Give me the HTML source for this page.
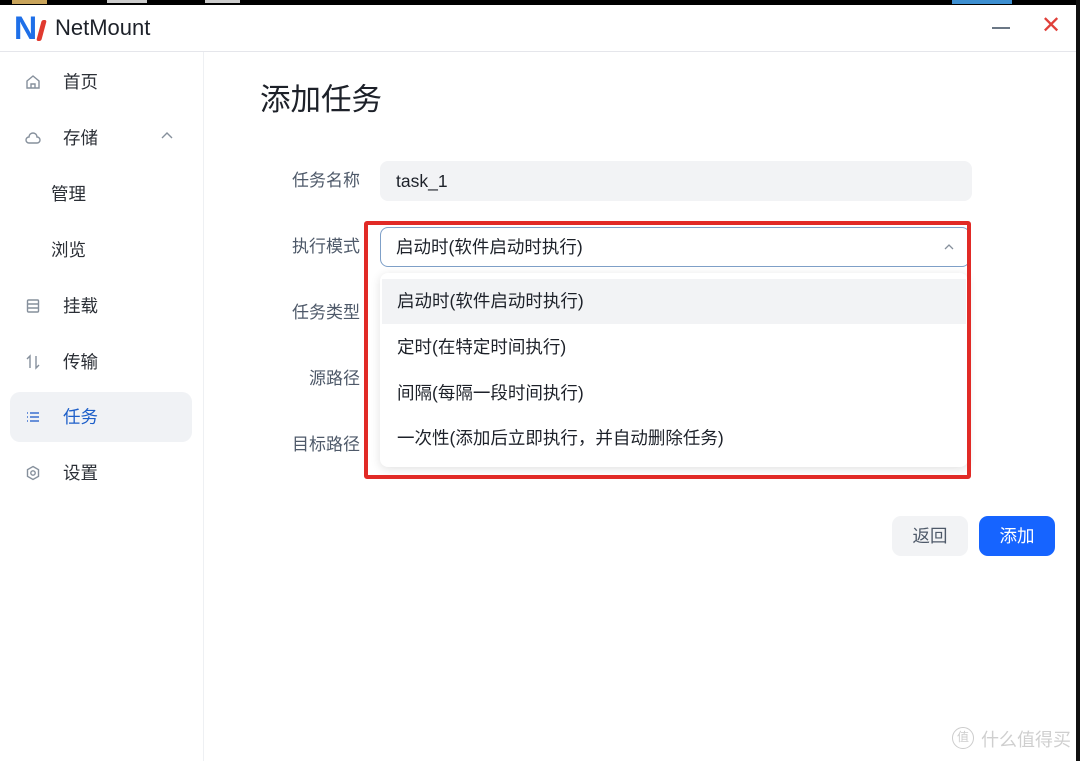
<!DOCTYPE html>
<html><head><meta charset="utf-8"><style>
*{margin:0;padding:0;box-sizing:border-box}
body{width:1080px;height:761px;overflow:hidden;background:#fff;font-family:"Liberation Sans","Noto Sans CJK SC",sans-serif;position:relative;color:#1d2129}
.a{position:absolute}
.nav{position:absolute;left:10px;width:182px;height:50px;border-radius:10px;font-size:17.5px;color:#2b2f36}
.nav span.t{position:absolute;left:53px;top:15px;line-height:20px}
.nav svg{position:absolute;left:15px;top:17px}
.lbl{position:absolute;font-size:17px;color:#4e5969;text-align:right;width:110px;left:250px;line-height:20px}
.opt{position:absolute;left:382px;width:584px;height:45px;font-size:17.5px;padding:12px 0 0 15px;color:#1d2129;line-height:20px}
</style></head><body>
<div class="a" style="left:0;top:0;width:1080px;height:5px;background:#000"></div>
<div class="a" style="left:12px;top:0;width:35px;height:4px;background:#c9a45a"></div>
<div class="a" style="left:107px;top:0;width:40px;height:3px;background:#ccc"></div>
<div class="a" style="left:205px;top:0;width:35px;height:3px;background:#ccc"></div>
<div class="a" style="left:952px;top:0;width:60px;height:4px;background:#3d8fd1"></div>
<div class="a" style="left:1076px;top:0;width:4px;height:761px;background:#111"></div>
<div class="a" style="left:0;top:51px;width:1076px;height:1px;background:#e5e6eb"></div>
<div class="a" style="left:14px;top:13px;font-size:32px;font-weight:bold;color:#1e6fe8;line-height:30px">N</div>
<div class="a" style="left:39px;top:20px;width:5px;height:21px;background:#e03a2f;transform:skewX(-15deg);border-radius:2px"></div>
<div class="a" style="left:55px;top:15px;font-size:22px;color:#1d2129;line-height:26px">NetMount</div>
<div class="a" style="left:992px;top:27px;width:18px;height:2px;background:#6b7785"></div>
<div class="a" style="left:1041px;top:14px;font-size:24px;color:#e0403a;line-height:24px">✕</div>
<div class="a" style="left:203px;top:52px;width:1px;height:709px;background:#eef0f3"></div>
<div class="nav" style="top:57px"><svg width="16" height="16" viewBox="0 0 16 16" fill="none" stroke="#86909c" stroke-width="1.4"><path d="M2 7L8 2l6 5v7H2z"/><path d="M6 14v-4h4v4"/></svg><span class="t">首页</span></div>
<div class="nav" style="top:113px"><svg width="16" height="16" viewBox="0 0 16 16" fill="none" stroke="#86909c" stroke-width="1.4"><path d="M4 13h8a3 3 0 0 0 0-6 4 4 0 0 0-8 0 3 3 0 0 0 0 6z"/></svg><span class="t">存储</span><svg style="left:150px;top:18px" width="14" height="10" viewBox="0 0 14 10" fill="none" stroke="#86909c" stroke-width="1.4"><path d="M2 7l5-5 5 5"/></svg></div>
<div class="nav" style="top:169px"><span class="t" style="left:41px">管理</span></div>
<div class="nav" style="top:225px"><span class="t" style="left:41px">浏览</span></div>
<div class="nav" style="top:281px"><svg width="16" height="16" viewBox="0 0 16 16" fill="none" stroke="#86909c" stroke-width="1.4"><rect x="2.5" y="2" width="11" height="12" rx="1"/><path d="M2.5 6h11M2.5 10h11"/></svg><span class="t">挂载</span></div>
<div class="nav" style="top:337px"><svg width="16" height="16" viewBox="0 0 16 16" fill="none" stroke="#86909c" stroke-width="1.4"><path d="M5 14V2L2 5M11 2v12l3-3"/></svg><span class="t">传输</span></div>
<div class="nav" style="top:392px;background:#f0f2f5;color:#1d5fc9"><svg width="16" height="16" viewBox="0 0 16 16" fill="none" stroke="#3a6fd0" stroke-width="1.4"><path d="M5 4h9M5 8h9M5 12h9M2 4h1M2 8h1M2 12h1"/></svg><span class="t">任务</span></div>
<div class="nav" style="top:448px"><svg width="16" height="16" viewBox="0 0 16 16" fill="none" stroke="#86909c" stroke-width="1.4"><path d="M8 1.5l5.5 3.2v6.6L8 14.5l-5.5-3.2V4.7z"/><circle cx="8" cy="8" r="2.2"/></svg><span class="t">设置</span></div>
<div class="a" style="left:260px;top:82px;font-size:30.5px;color:#1d2129;line-height:36px">添加任务</div>
<div class="lbl" style="top:171px">任务名称</div>
<div class="a" style="left:380px;top:161px;width:592px;height:40px;background:#f2f3f5;border-radius:8px;font-size:17.5px;padding:10px 0 0 16px;line-height:20px">task_1</div>
<div class="lbl" style="top:237px">执行模式</div>
<div class="lbl" style="top:303px">任务类型</div>
<div class="lbl" style="top:369px">源路径</div>
<div class="lbl" style="top:435px">目标路径</div>
<div class="a" style="left:380px;top:227px;width:590px;height:40px;border:1px solid #7fa0c8;border-radius:8px;background:#fff;font-size:17.5px;padding:9px 0 0 15px;line-height:20px">启动时(软件启动时执行)</div>
<svg class="a" style="left:943px;top:243px" width="12" height="8" viewBox="0 0 12 8" fill="none" stroke="#86909c" stroke-width="1.3"><path d="M2 6l4-4 4 4"/></svg>
<div class="a" style="left:380px;top:273px;width:588px;height:194px;background:#fff;border-radius:8px;box-shadow:0 2px 10px rgba(0,0,0,.12)"></div>
<div class="opt" style="top:279px;background:#f2f3f5">启动时(软件启动时执行)</div>
<div class="opt" style="top:325px">定时(在特定时间执行)</div>
<div class="opt" style="top:371px">间隔(每隔一段时间执行)</div>
<div class="opt" style="top:416px">一次性(添加后立即执行，并自动删除任务)</div>
<div class="a" style="left:364px;top:221px;width:607px;height:258px;border:4px solid #e12a26;border-radius:3px"></div>
<div class="a" style="left:892px;top:516px;width:76px;height:40px;background:#f2f3f5;border-radius:9px;font-size:17.5px;color:#4e5969;text-align:center;line-height:40px">返回</div>
<div class="a" style="left:979px;top:516px;width:76px;height:40px;background:#1664ff;border-radius:9px;font-size:17.5px;color:#fff;text-align:center;line-height:40px">添加</div>
<div class="a" style="left:952px;top:727px;width:22px;height:22px;border:1.5px solid #ccc;border-radius:50%;font-size:12px;color:#ccc;text-align:center;line-height:19px">值</div>
<div class="a" style="left:981px;top:729px;font-size:18px;color:#cfcfcf;line-height:22px">什么值得买</div>
</body></html>
